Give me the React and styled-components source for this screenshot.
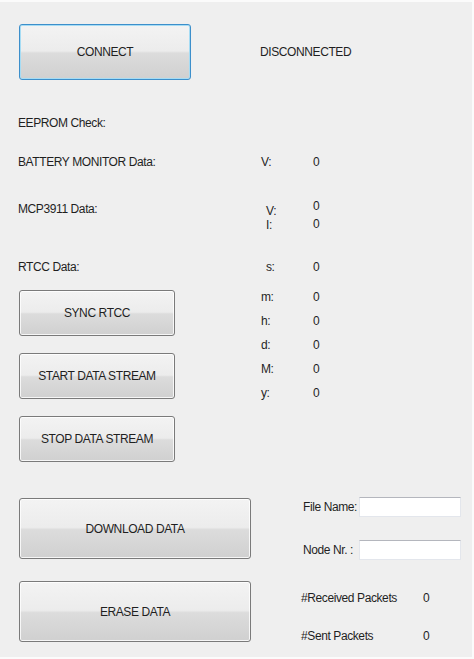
import { Fragment } from "react";
import styled, { createGlobalStyle } from "styled-components";

const GlobalStyle = createGlobalStyle`
  html, body {
    margin: 0;
    padding: 0;
    background: #ffffff;
    overflow: hidden;
  }
`;

const Window = styled.div`
  box-sizing: border-box;
  width: 474px;
  height: 659px;
  background: #efefef;
  border-top: 2px solid #fbfbfb;
  border-right: 2px solid #fbfbfb;
  border-bottom: 2px solid #fbfbfb;
  padding-left: 18px;
  font-family: "Liberation Sans", Arial, sans-serif;
  font-size: 12px;
  letter-spacing: -0.4px;
  color: #1f1f1f;
  display: flex;
  flex-direction: column;
`;

const Button = styled.button`
  box-sizing: border-box;
  margin: 0 0 0 1px;
  width: ${p => p.$w}px;
  height: ${p => p.$h}px;
  font: inherit;
  letter-spacing: inherit;
  color: #1f1f1f;
  border: 1px solid ${p => (p.$focused ? "#3c8fcb" : "#7a7a7a")};
  border-radius: 3px;
  background: linear-gradient(
    #f3f3f3 0%,
    #ececec 48%,
    #dcdcdc 52%,
    #d0d0d0 100%
  );
  box-shadow: inset 0 0 0 1px
    ${p => (p.$focused ? "#a6dcf4" : "rgba(255, 255, 255, 0.8)")};
  padding: 0;
  cursor: pointer;
`;

const TopRow = styled.div`
  display: flex;
  align-items: center;
  padding-top: 22px;
`;

const Status = styled.span`
  margin-left: 69px;
`;

const Text = styled.div`
  line-height: 16px;
  margin-top: ${p => p.$top || 0}px;
  white-space: nowrap;
`;

const DataRow = styled.div`
  display: flex;
  align-items: flex-start;
  margin-top: ${p => p.$top}px;
`;

const RowLabel = styled.div`
  width: 243px;
  line-height: 16px;
  margin-top: ${p => p.$offset || 0}px;
  white-space: nowrap;
`;

const Keys = styled.div`
  width: ${p => 52 - (p.$indent || 0)}px;
  padding-left: ${p => p.$indent || 0}px;
  padding-top: ${p => p.$padTop || 0}px;
  line-height: ${p => p.$line || 16}px;
  display: flex;
  flex-direction: column;
`;

const Values = styled.div`
  line-height: ${p => p.$line || 16}px;
  display: flex;
  flex-direction: column;
`;

const RtccBlock = styled.div`
  display: flex;
  align-items: flex-start;
`;

const ButtonColumn = styled.div`
  width: ${p => p.$width}px;
  display: flex;
  flex-direction: column;
  gap: ${p => p.$gap}px;
  margin-top: ${p => p.$top}px;
`;

const TimeFields = styled.div`
  display: grid;
  grid-template-columns: 52px auto;
  grid-auto-rows: 24px;
  align-items: center;
  margin-top: 10px;
`;

const BottomBlock = styled.div`
  display: flex;
  align-items: flex-start;
`;

const SidePanel = styled.div`
  display: flex;
  flex-direction: column;
  margin-top: 35px;
`;

const FormRow = styled.div`
  display: flex;
  align-items: center;
  height: 20px;
  margin-top: ${p => p.$top || 0}px;
`;

const FormLabel = styled.label`
  width: 56px;
  padding-left: 2px;
  white-space: nowrap;
`;

const TextBox = styled.input`
  box-sizing: border-box;
  width: 102px;
  height: 20px;
  margin: 0;
  background: #ffffff;
  border: 1px solid #e3e6ec;
  border-top-color: #b4b6bd;
  outline: none;
`;

const CounterRow = styled.div`
  display: flex;
  line-height: 16px;
  margin-top: ${p => p.$top}px;
`;

const CounterLabel = styled.span`
  width: 122px;
  white-space: nowrap;
`;

const timeKeys = ["m:", "h:", "d:", "M:", "y:"];

const App = () => {
  return (
    <>
      <GlobalStyle />
      <Window>
        <TopRow>
          <Button $w={172} $h={56} $focused>
            CONNECT
          </Button>
          <Status>DISCONNECTED</Status>
        </TopRow>

        <Text $top={35}>EEPROM Check:</Text>

        <DataRow $top={23}>
          <RowLabel>BATTERY MONITOR Data:</RowLabel>
          <Keys>V:</Keys>
          <Values>0</Values>
        </DataRow>

        <DataRow $top={27}>
          <RowLabel $offset={4}>MCP3911 Data:</RowLabel>
          <Keys $indent={5} $padTop={7} $line={14}>
            <span>V:</span>
            <span>I:</span>
          </Keys>
          <Values $line={18}>
            <span>0</span>
            <span>0</span>
          </Values>
        </DataRow>

        <DataRow $top={26}>
          <RowLabel>RTCC Data:</RowLabel>
          <Keys $indent={5}>s:</Keys>
          <Values>0</Values>
        </DataRow>

        <RtccBlock>
          <ButtonColumn $width={243} $gap={17} $top={15}>
            <Button $w={156} $h={46}>SYNC RTCC</Button>
            <Button $w={156} $h={46}>START DATA STREAM</Button>
            <Button $w={156} $h={46}>STOP DATA STREAM</Button>
          </ButtonColumn>
          <TimeFields>
            {timeKeys.map(k => (
              <Fragment key={k}>
                <span>{k}</span>
                <span>0</span>
              </Fragment>
            ))}
          </TimeFields>
        </RtccBlock>

        <BottomBlock>
          <ButtonColumn $width={283} $gap={22} $top={36}>
            <Button $w={232} $h={61}>DOWNLOAD DATA</Button>
            <Button $w={232} $h={61}>ERASE DATA</Button>
          </ButtonColumn>
          <SidePanel>
            <FormRow>
              <FormLabel>File Name:</FormLabel>
              <TextBox />
            </FormRow>
            <FormRow $top={23}>
              <FormLabel>Node Nr. :</FormLabel>
              <TextBox />
            </FormRow>
            <CounterRow $top={30}>
              <CounterLabel>#Received Packets</CounterLabel>
              <span>0</span>
            </CounterRow>
            <CounterRow $top={22}>
              <CounterLabel>#Sent Packets</CounterLabel>
              <span>0</span>
            </CounterRow>
          </SidePanel>
        </BottomBlock>
      </Window>
    </>
  );
};

export default App;
